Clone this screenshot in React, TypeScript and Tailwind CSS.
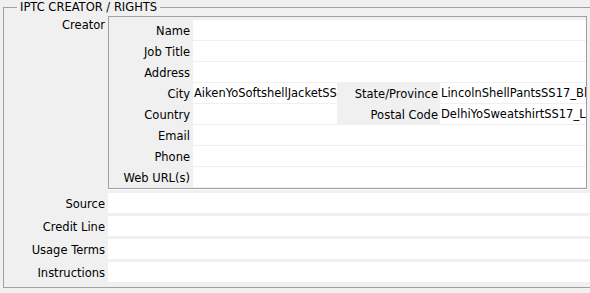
const creatorRows = ["Name", "Job Title", "Address"];
const contactRows = ["Email", "Phone", "Web URL(s)"];
const rightsRows = ["Source", "Credit Line", "Usage Terms", "Instructions"];

function CreatorRow({ label, value }: { label: string; value?: string }) {
  return (
    <div className="flex h-[20px]">
      <div className="w-[84px] pr-[3px] pt-[1px] text-right flex items-center justify-end">{label}</div>
      <div className="flex-1 bg-white pl-[1px] flex items-center overflow-hidden whitespace-nowrap">{value}</div>
    </div>
  );
}

function SplitRow({
  label,
  value,
  label2,
  value2,
}: {
  label: string;
  value?: string;
  label2: string;
  value2?: string;
}) {
  return (
    <div className="flex h-[20px]">
      <div className="w-[84px] pr-[3px] pt-[1px] flex items-center justify-end">{label}</div>
      <div className="w-[144px] bg-white pl-[1px] flex items-center overflow-hidden whitespace-nowrap">{value}</div>
      <div className="w-[103px] pr-[2px] pt-[1px] flex items-center justify-end whitespace-nowrap">{label2}</div>
      <div className="flex-1 bg-white pl-[1px] flex items-center overflow-hidden whitespace-nowrap">{value2}</div>
    </div>
  );
}

export default function App() {
  return (
    <div className="w-[590px] h-[293px] overflow-hidden bg-[#f0f0f0] text-[11.5px] leading-[14px] text-black font-['DejaVu_Sans',sans-serif]">
      <div className="pl-[3px]">
        <fieldset className="w-[600px] border border-r-0 border-[#a0a0a0] pb-[5px]">
          <legend className="ml-[13px] px-[3px] leading-[15px]">IPTC CREATOR / RIGHTS</legend>

          {/* Creator block */}
          <div className="flex pt-[1px]">
            <div className="w-[104px] pr-[3px] pt-[2px] text-right">Creator</div>
            <div className="w-[479px] border border-[#a0a0a0] pt-[3px] pb-[1px] flex flex-col gap-[1px] shadow-[0_1px_0_#fff]">
              {creatorRows.map((r) => (
                <CreatorRow key={r} label={r} />
              ))}
              <SplitRow
                label="City"
                value="AikenYoSoftshellJacketSS17"
                label2="State/Province"
                value2="LincolnShellPantsSS17_Black"
              />
              <SplitRow label="Country" label2="Postal Code" value2="DelhiYoSweatshirtSS17_Lime" />
              {contactRows.map((r) => (
                <CreatorRow key={r} label={r} />
              ))}
            </div>
          </div>

          {/* Rights fields */}
          <div className="flex flex-col gap-[3px] mt-[4px]">
            {rightsRows.map((r) => (
              <div key={r} className="flex h-[20px]">
                <div className="w-[104px] pr-[3px] pt-[1px] flex items-center justify-end">{r}</div>
                <div className="flex-1 bg-white" />
              </div>
            ))}
          </div>
        </fieldset>
      </div>
    </div>
  );
}
